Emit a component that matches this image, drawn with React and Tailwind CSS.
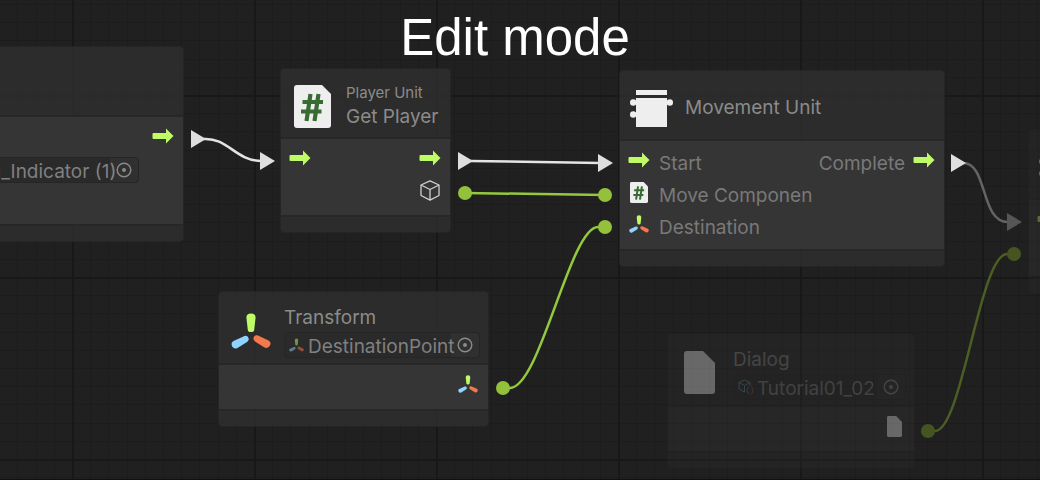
import { clsx } from "clsx";

const ArrowIcon = () => (
  <svg width="22" height="16" viewBox="0 0 22 16" className="shrink-0">
    <path d="M1.5 5H14V.5L21.5 8L14 15.5V11H1.5Q.5 11 .5 10V6Q.5 5 1.5 5Z" fill="#bffb66" />
  </svg>
);

const ScriptIcon = ({ className }) => (
  <svg viewBox="0 0 37 43" className={clsx("shrink-0", className)}>
    <path d="M3 0H28L37 9V40Q37 43 34 43H3Q0 43 0 40V3Q0 0 3 0Z" fill="#eeeeee" />
    <g stroke="#376b32" strokeWidth="4.2" fill="none">
      <path d="M16.5 9L12.5 36M24.5 9L20.5 36M8.5 17H29M7 26.5H27.5" />
    </g>
  </svg>
);

const FileIcon = ({ className }) => (
  <svg viewBox="0 0 31 43" className={clsx("shrink-0", className)}>
    <path d="M3 0H19L31 12V40Q31 43 28 43H3Q0 43 0 40V3Q0 0 3 0Z" fill="#eeeeee" />
  </svg>
);

const TransformIcon = ({ className }) => (
  <svg viewBox="0 0 40 36" className={clsx("shrink-0", className)}>
    <path d="M15.4 4.5Q15.4 .5 20 .5T24.6 4.5L23.2 17Q23 19 20 19T16.8 17Z" fill="#bffb66" />
    <path d="M13.5 23Q16.5 22.3 17.5 25Q18.200 27.500 16 29L6.500 35Q3 36.500 1.200 33.500Q-.6 29.500 2.500 28Z" fill="#8fd3ff" />
    <path d="M26.500 22.300Q23.500 22 22.600 24.500Q22 27 24 28.500L33.500 34.500Q37 36 39 32.500Q40.500 29 37.500 27.500Z" fill="#f3794d" />
  </svg>
);

const UnitIcon = ({ className }) => (
  <svg viewBox="0 0 43 37" className={clsx("shrink-0", className)} fill="#eeeeee">
    <path d="M6 0H37V5H6ZM6 8H37V37H6Z" />
    <circle cx="3.200" cy="12.500" r="3.200" />
    <circle cx="3.200" cy="24.500" r="3.200" />
    <circle cx="39.800" cy="12.500" r="3.200" />
  </svg>
);

const CubeIcon = () => (
  <svg width="20" height="21" viewBox="0 0 20 21" className="shrink-0" fill="none" stroke="#cfcfcf" strokeWidth="1.300" strokeLinejoin="round">
    <path d="M10 .8L19 5V15.500L10 20.200L1 15.500V5ZM1 5L10 9.500L19 5M10 9.500V20.200" />
  </svg>
);

const PrefabIcon = () => (
  <svg width="16" height="16" viewBox="0 0 16 16" className="mr-[3px] shrink-0" fill="none">
    <path d="M6.500 1L12 3.500V7M6.500 1L1 3.500V10L6.500 13M1 3.500L6.500 6.500L12 3.500M6.500 6.500V13" stroke="#5f8ba3" />
    <path d="M11 8Q9.500 8 9.500 9.500T8.500 11.500Q9.500 11.500 9.500 13T11 15M13 8Q14.500 8 14.500 9.500T15.500 11.500Q14.500 11.500 14.500 13T13 15" stroke="#a35a41" />
  </svg>
);

const ObjectField = ({ label, value, icon, className }) => (
  <div className={clsx("flex h-[26px] items-center rounded border border-[#262626] bg-[#2a2a2a]", className)}>
    {icon}
    <input
      aria-label={label}
      defaultValue={value}
      className="-mr-[5px] h-6 w-0 min-w-0 flex-1 bg-transparent pt-[3px] text-[19px] leading-6 text-[#808080] outline-none"
    />
    <button aria-label={"Select " + label} className="flex h-6 w-7 shrink-0 items-center justify-center rounded-r bg-white/3">
      <svg width="16" height="16" viewBox="0 0 16 16">
        <circle cx="8" cy="8" r="6.800" fill="none" stroke="#8a8a8a" strokeWidth="1.400" />
        <circle cx="8" cy="8" r="2" fill="#8a8a8a" />
      </svg>
    </button>
  </div>
);

const Node = ({ icon, header, children, className }) => (
  <section className={clsx("absolute rounded-sm border border-[#252525] bg-[#303030]/80", className)}>
    <header className="flex items-center gap-3 border-b-2 border-[#272727] pt-3 pr-2 pb-2 pl-[10px]">
      <div className="flex w-[43px] shrink-0 justify-center pt-[2px]">{icon}</div>
      <div className="flex min-h-12 min-w-0 flex-1 flex-col justify-center text-[19px] leading-6 text-[#8b8b8b]">{header}</div>
    </header>
    <div className="bg-[#383838]/80 px-2 py-[6px]">{children}</div>
    <footer className="h-[17px] border-t-2 border-[#272727]"></footer>
  </section>
);

// one line of ports, input side on the left and output side on the right
const PortRow = ({ input, label, output, outputLabel }) => (
  <div className="flex h-8 justify-between pr-px text-[19px] leading-[34px] text-[#797979]">
    <div className="flex gap-[9px]">
      <span className="flex h-[26px] w-[22px] items-center justify-center">{input}</span>
      {label && <span className="whitespace-nowrap">{label}</span>}
    </div>
    <div className="flex gap-2">
      {outputLabel && <span>{outputLabel}</span>}
      <span className="flex h-[26px] w-[22px] items-center justify-center">{output}</span>
    </div>
  </div>
);

const minor = [18, 36, 55, 73, 91, 109, 127, 146, 164];

const Grid = () => (
  <svg className="absolute inset-0 h-full w-full" aria-hidden="true">
    <defs>
      <pattern id="grid" x="72" y="95" width="182" height="182" patternUnits="userSpaceOnUse">
        {minor.map((n) => (
          <path key={n} d={`M${n} 0h1v182h-1zM0 ${n}h182v1h-182z`} fill="#1c1c1c" />
        ))}
        <path d="M0 0h2v182h-2zM0 0h182v2h-182z" fill="#181818" />
      </pattern>
    </defs>
    <rect width="100%" height="100%" fill="url(#grid)" />
  </svg>
);

const Wires = () => (
  <svg className="pointer-events-none absolute inset-0 h-full w-full" fill="none" strokeWidth="2.500" aria-hidden="true">
    <g stroke="#e4e4e4">
      <path d="M203 139C228 137 235 161 262 161" />
      <path d="M470 161L600 163" />
    </g>
    <path d="M963 163C988 163 980 222 1008 222" stroke="#646464" />
    <g stroke="#95c93d">
      <path d="M465 193L605 195" />
      <path d="M503 388H510C540 388 570 227 598 227H605" />
    </g>
    <path d="M928 431H935C962 431 980 254 1007 254H1014" stroke="#4d5e24" />
    <g fill="#dedede">
      <path d="M191 130L206 139L191 148ZM260 152L275 161L260 170ZM458 152L473 161L458 170ZM598 154L613 163L598 172ZM951 154L966 163L951 172Z" />
    </g>
    <path d="M1007 213L1022 222L1007 231Z" fill="#565656" />
    <g fill="#94c13c">
      <circle cx="465" cy="193" r="7" />
      <circle cx="605" cy="195" r="7" />
      <circle cx="605" cy="227" r="7" />
      <circle cx="503" cy="388" r="7" />
    </g>
    <g fill="#465422">
      <circle cx="1014" cy="254" r="7" />
      <circle cx="928" cy="431" r="7" />
    </g>
  </svg>
);

export default function App() {
  return (
    <main className="relative min-h-screen overflow-hidden border-b border-[#180e12] bg-[#202020] font-['Inter',sans-serif]">
      <Grid />

      <Node className="top-[46px] -left-[80px] w-[264px]">
        <PortRow output={<ArrowIcon />} />
        <ObjectField label="Indicator" value="n_Indicator (1)" className="mt-[2px] mr-9 ml-[60px]" />
        <div className="h-[35px]"></div>
      </Node>

      <Node
        className="top-[68px] left-[280px] w-[171px]"
        icon={<ScriptIcon className="h-[43px] w-[37px]" />}
        header={
          <>
            <p className="text-[15px]">Player Unit</p>
            <h2>Get Player</h2>
          </>
        }
      >
        <PortRow input={<ArrowIcon />} output={<ArrowIcon />} />
        <PortRow output={<CubeIcon />} />
      </Node>

      <Node
        className="top-[70px] left-[619px] w-[326px]"
        icon={<UnitIcon className="h-[37px] w-[43px]" />}
        header={<h2 className="pt-[2px]">Movement Unit</h2>}
      >
        <PortRow input={<ArrowIcon />} label="Start" output={<ArrowIcon />} outputLabel="Complete" />
        <PortRow input={<ScriptIcon className="h-[21px] w-[18px]" />} label="Move Componen" />
        <PortRow input={<TransformIcon className="h-[18px] w-[20px]" />} label="Destination" />
      </Node>

      <Node
        className="top-[291px] left-[218px] w-[271px]"
        icon={<TransformIcon className="h-[36px] w-[40px]" />}
        header={
          <>
            <h2 className="pt-[2px]">Transform</h2>
            <ObjectField
              label="Transform"
              value="DestinationPoint"
              icon={<TransformIcon className="mx-1 h-[14px] w-[15px] opacity-50" />}
              className="mt-[2px] -mb-[3px]"
            />
          </>
        }
      >
        <PortRow output={<TransformIcon className="h-[18px] w-[20px]" />} />
      </Node>

      <Node
        className="top-[333px] left-[667px] w-[248px] opacity-35"
        icon={<FileIcon className="h-[43px] w-[31px]" />}
        header={
          <>
            <h2 className="pt-[2px]">Dialog</h2>
            <ObjectField label="Dialog" value="Tutorial01_02" icon={<PrefabIcon />} className="mt-[2px] -mb-[3px] pl-1" />
          </>
        }
      >
        <PortRow output={<FileIcon className="h-[21px] w-[15px]" />} />
      </Node>

      <Node className="top-[129px] left-[1028px] w-[180px] opacity-35" icon={<UnitIcon className="h-[37px] w-[43px]" />}>
        <PortRow input={<ArrowIcon />} />
        <PortRow />
      </Node>

      <Wires />

      <h1 className="relative pt-2 pr-[10px] text-center font-['Liberation_Sans',Arial,sans-serif] text-[51px] leading-[60px] text-white">
        Edit mode
      </h1>
    </main>
  );
}
